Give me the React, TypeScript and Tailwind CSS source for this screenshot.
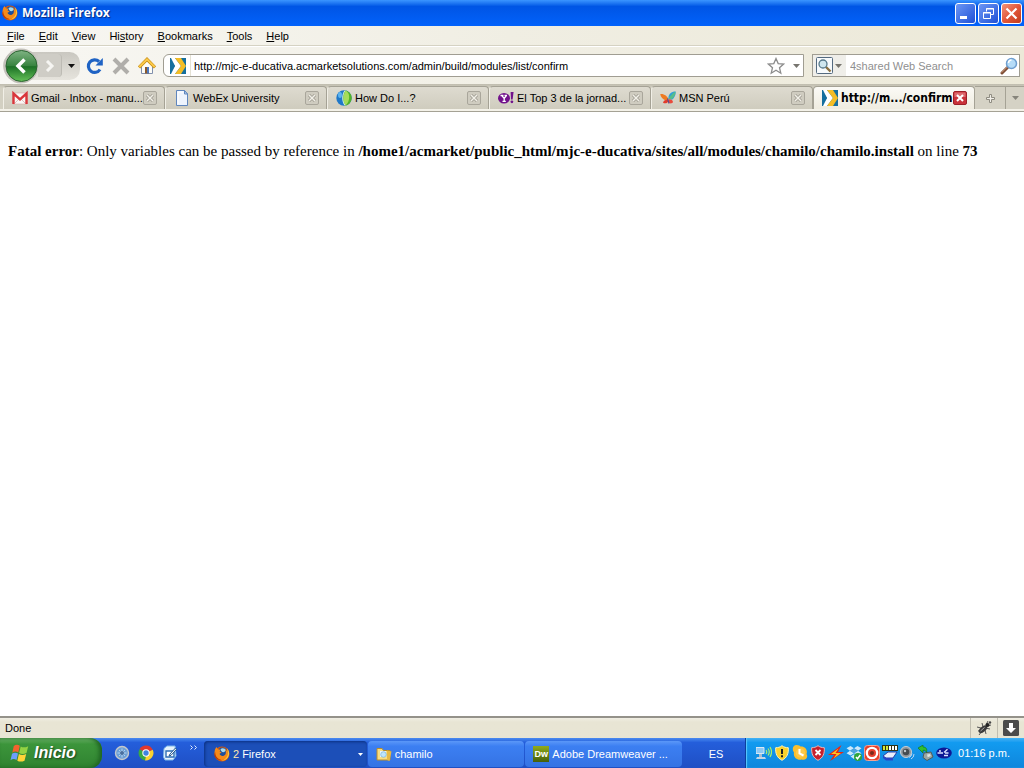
import type { ReactNode } from 'react';

const menus = [
  ['', 'F', 'ile'],
  ['', 'E', 'dit'],
  ['', 'V', 'iew'],
  ['Hi', 's', 'tory'],
  ['', 'B', 'ookmarks'],
  ['', 'T', 'ools'],
  ['', 'H', 'elp'],
];

function FirefoxIcon() {
  return (
    <svg viewBox="0 0 16 16" className="h-4 w-4 shrink-0" aria-hidden="true">
      <circle cx="8" cy="8" r="7.5" fill="#d9580a" />
      <circle cx="8.4" cy="6.6" r="5" fill="#1d4f9c" />
      <path d="M6.500 3c2-1.500 5-.5 5.500 1.500-1 .4-1.200 1.800-2.700 1.800S6.700 4.500 6.500 3z" fill="#a4dcf2" />
      <path d="M1 3.500L2.300 1l1.700 2.200 2.600.6-1 1.800 2 .7c-.6 1-1.700 1.100-2 1.500.4 1.700 2.300 2.700 4.200 1.900 1.600-.6 2.300-2 2-4.200l-.9-2.300 2.700 2.100c.8 3-.1 6-2.800 7.700-3 1.700-7 1-9-1.700C.3 8.800.3 5.900 1 3.500z" fill="#f58a1a" />
      <path d="M12.800 2.300c2.600 2.500 3.200 6.300 1 9.400-1.600 2.200-4.300 3.200-6.800 2.900 3.800-.6 6.800-3.600 6.800-7.300 0-2-.5-3.700-1-5z" fill="#fbc73a" />
      <path d="M1.300 6.300c-.3 3.800 2.400 7.300 6.200 7.500-2.600.6-5.800-.7-6.900-3.600-.4-1.400-.2-3 .7-3.900z" fill="#b33809" />
    </svg>
  );
}

function ChevronLogo() {
  return (
    <svg viewBox="0 0 16 16" className="h-4 w-4 shrink-0" aria-hidden="true">
      <path d="M0 0h16v16H0z" fill="#156f9e" />
      <path d="M1 0h4l6 8-6 8H1l4-8z" fill="#fff" />
      <path d="M1 2.500L5 8l-4 5.500z" fill="#156f9e" />
      <path d="M5 0h6l5 8-5 8H5l6-8z" fill="#f4bd25" />
    </svg>
  );
}

function GmailIcon() {
  return (
    <svg viewBox="0 0 16 16" className="h-4 w-4 shrink-0" aria-hidden="true">
      <path d="M1 3h14v11H1z" fill="#faf6f4" stroke="#d6a9a5" strokeWidth=".6" />
      <path d="M3 13l4-4M13 13L9 9" stroke="#d9c2be" />
      <path d="M1.500 14V3.500L8 9.300l6.500-5.800V14" fill="none" stroke="#d9363b" strokeWidth="2.400" />
    </svg>
  );
}

function PageIcon() {
  return (
    <svg viewBox="0 0 16 16" className="h-4 w-4 shrink-0" aria-hidden="true">
      <path d="M2.500.5h8l3 3.500v11.500h-11z" fill="#eef4fd" stroke="#5f86bd" />
      <path d="M10.500.5V4h3z" fill="#b8d0f0" stroke="#5f86bd" />
      <path d="M4 14V2h5" fill="none" stroke="#fff" />
    </svg>
  );
}

function GlobeIcon() {
  return (
    <svg viewBox="0 0 16 16" className="h-4 w-4 shrink-0" aria-hidden="true">
      <circle cx="8" cy="8" r="7.700" fill="#1f78c8" />
      <path d="M9 .4c4.300.5 6.700 4 6.700 7.600s-2.700 7-6.700 7.700C6 12 6 4 9 .4z" fill="#53b427" />
      <path d="M9.500.6C13 2.500 13.500 6 13 9s-2 5.500-4 6.500C7 11 7 5 9.500.6z" fill="#a6dc5c" />
      <path d="M9 .6C6 4 6 12 9 15.400" fill="none" stroke="#d4f0f0" />
      <ellipse cx="4" cy="5" rx="2" ry="3" fill="#5db4ee" />
    </svg>
  );
}

function YahooIcon() {
  return (
    <svg viewBox="0 0 16 16" className="h-4 w-4 shrink-0" aria-hidden="true">
      <ellipse cx="6" cy="8.300" rx="6" ry="5.300" fill="#72128c" />
      <path d="M2.500 5.500h3M6.500 5.500H9M4 5.800l2.200 2.700 2-2.700M6.200 8.500v2.700M4.500 11.300h3.300" fill="none" stroke="#fff" strokeWidth="1.300" />
      <path d="M12.600 2h3l-1 7.500H13z" fill="#72128c" />
      <circle cx="13.900" cy="11.800" r="1.400" fill="#72128c" />
    </svg>
  );
}

function MsnIcon() {
  return (
    <svg viewBox="0 0 16 16" className="h-4 w-4 shrink-0" aria-hidden="true">
      <path d="M8.500 9C8 4.500 11 1.500 15.500 1.500c.7 2.500-1 6.500-3.500 8.300z" fill="#2e9fdb" />
      <path d="M8.500 9c1.500-3 3.500-5.500 7-7.500 0 3-1.500 6-3.500 7.500z" fill="#58bd8a" />
      <path d="M8.500 9.500C7.500 6 4 3.500.3 4 .5 7 3 9.500 6 10.300z" fill="#ee7a22" />
      <path d="M8 9.700c-3-.2-4.500 1-5 3 2.500 1.300 4.500.3 5.500-1.500z" fill="#e33b2b" />
      <path d="M8.500 9.500c2.500-.5 4 .5 4.500 2.500-1.200 2.200-3.800 1.800-4.700-.5z" fill="#e94b3c" />
      <path d="M7.500 8.500l1.600 5" stroke="#5d4a8c" strokeWidth="1.200" />
    </svg>
  );
}

function CloseGlyph({ active }: { active?: boolean }) {
  return (
    <svg viewBox="0 0 14 14" className="h-3.5 w-3.5" aria-hidden="true">
      <rect x=".5" y=".5" width="13" height="13" rx="1.500" fill={active ? '#c9323a' : '#cfccc0'} stroke={active ? '#9d1f27' : '#a9a69b'} />
      {active && <path d="M1.500 1.500h11v4.500h-11z" fill="#dc6a6e" />}
      <path d="M4 4l6 6M10 4l-6 6" stroke={active ? '#fff' : '#9b988d'} strokeWidth={active ? 2 : 3} />
      {!active && <path d="M4 4l6 6M10 4l-6 6" stroke="#f2f0e8" strokeWidth="1.500" />}
    </svg>
  );
}

function Caret({ color }: { color: string }) {
  return (
    <svg viewBox="0 0 7 4" className="h-1 w-[7px] shrink-0" aria-hidden="true">
      <path d="M0 0h7L3.500 4z" fill={color} />
    </svg>
  );
}

const tabs: { icon: ReactNode; title: string }[] = [
  { icon: <GmailIcon />, title: 'Gmail - Inbox - manu...' },
  { icon: <PageIcon />, title: 'WebEx University' },
  { icon: <GlobeIcon />, title: 'How Do I...?' },
  { icon: <YahooIcon />, title: 'El Top 3 de la jornad...' },
  { icon: <MsnIcon />, title: 'MSN Perú' },
];

function TitleBar() {
  return (
    <header className="flex h-[26px] items-center bg-linear-to-b from-[#3b95ff] via-[#0055e5] via-25% to-[#0262fb] pr-0.5 pl-0.5">
      <FirefoxIcon />
      <h1 className="flex-1 pl-1 font-['Open_Sans',sans-serif] text-xs font-bold text-white [text-shadow:1px_1px_1px_#0a2a80]">Mozilla Firefox</h1>
      <div className="flex gap-0.5">
        <button aria-label="Minimize" className="h-[21px] w-[21px] rounded-[3px] border border-white bg-linear-to-br from-[#6d96f4] to-[#1f4fd6]">
          <svg viewBox="0 0 19 19" className="h-full w-full"><path d="M4 12h7v3H4z" fill="#fff" /></svg>
        </button>
        <button aria-label="Restore" className="h-[21px] w-[21px] rounded-[3px] border border-white bg-linear-to-br from-[#6d96f4] to-[#1f4fd6]">
          <svg viewBox="0 0 19 19" className="h-full w-full">
            <path d="M7.500 7.500v-3h7v6h-3M7 5h8M4.500 8.500h7v6h-7zM4 9h8" fill="none" stroke="#fff" />
          </svg>
        </button>
        <button aria-label="Close" className="h-[21px] w-[21px] rounded-[3px] border border-white bg-linear-to-br from-[#f0937a] via-[#e2573a] to-[#c23c1a]">
          <svg viewBox="0 0 19 19" className="h-full w-full"><path d="M4.500 4.500l10 10M14.500 4.500l-10 10" stroke="#fff" strokeWidth="2.200" /></svg>
        </button>
      </div>
    </header>
  );
}

function MenuBar() {
  return (
    <nav className="flex h-5 items-center gap-3.5 border-b border-[#d5d2c3] bg-linear-to-r from-[#f8f7f3] via-[#f0eee3] to-[#ece9d8] px-[7px]">
      {menus.map(([before, key, after]) => (
        <button key={before + key + after}>
          {before}<span className="underline underline-offset-1">{key}</span>{after}
        </button>
      ))}
    </nav>
  );
}

function NavBar() {
  return (
    <div className="flex h-[38px] items-center border-t border-white bg-linear-to-r from-[#f8f7f3] via-[#f1efe5] to-[#ece9d8] pr-1 pl-[3px]">
      {/* Keyhole: back, forward, history */}
      <div className="flex h-7 w-[77px] shrink-0 items-center rounded-l-2xl rounded-r-xl bg-linear-to-b from-[#c9c7c0] to-[#e6e4dd]">
        <button aria-label="Back" className="-ml-px h-9 w-9 shrink-0">
          <svg viewBox="0 0 36 36" className="h-9 w-9">
            <defs>
              <linearGradient id="back" x1="0" y1="0" x2="0" y2="1">
                <stop offset="0" stopColor="#7fb383" />
                <stop offset=".5" stopColor="#37833f" />
                <stop offset=".52" stopColor="#1c7026" />
                <stop offset="1" stopColor="#64c157" />
              </linearGradient>
            </defs>
            <circle cx="19" cy="18" r="17.500" fill="#c2c0b9" />
            <circle cx="19.500" cy="18" r="15.500" fill="url(#back)" stroke="#2c6632" />
            <path d="M22.500 11.500L16 18l6.500 6.500" fill="none" stroke="#fff" strokeWidth="3.500" />
          </svg>
        </button>
        <button aria-label="Forward" className="flex h-[23px] w-6 items-center justify-center rounded-r-sm border-r border-[#bdbbb4] bg-[#cfcdc6]">
          <svg viewBox="0 0 10 12" className="h-3 w-2.5"><path d="M2 1l5 5-5 5" fill="none" stroke="#f6f5f2" strokeWidth="3" /></svg>
        </button>
        <button aria-label="Recent pages" className="flex flex-1 items-center justify-center"><Caret color="#111" /></button>
      </div>
      <div className="flex shrink-0 items-center gap-2 pr-[7px] pl-1.5">
        <button aria-label="Reload">
          <svg viewBox="0 0 18 18" className="h-[18px] w-[18px]">
            <path d="M14 12.500A6.300 6.300 0 1 1 13 4.500" fill="none" stroke="#1f63c4" strokeWidth="3.200" />
            <path d="M16.800 1v7.500H9.500z" fill="#1f63c4" />
          </svg>
        </button>
        <button aria-label="Stop">
          <svg viewBox="0 0 18 18" className="h-[18px] w-[18px]"><path d="M2 2l14 14M16 2L2 16" stroke="#b0aeaa" strokeWidth="4" /></svg>
        </button>
        <button aria-label="Home">
          <svg viewBox="0 0 18 18" className="h-[18px] w-[18px]">
            <path d="M3.500 9v7.500h11V9L9 4z" fill="#fdfcf6" stroke="#8190ad" />
            <path d="M7 10h4v6.500H7z" fill="#8a5a2c" />
            <path d="M9 10h2v6.500H9z" fill="#4c78c0" />
            <path d="M1 10.500L9 2.300l8 8.200" fill="none" stroke="#c78d12" strokeWidth="3.200" />
            <path d="M1.300 10L9 2.300 16.700 10" fill="none" stroke="#fbc94a" strokeWidth="1.800" />
          </svg>
        </button>
      </div>
      <form className="flex h-[23px] flex-1 items-center rounded-l-md border border-[#a09d92] bg-white pr-0.5">
        <span className="mr-[3px] flex h-full items-center border-r border-[#e4e1d4] pr-1 pl-1.5"><ChevronLogo /></span>
        <input
          aria-label="Location"
          type="text"
          defaultValue="http://mjc-e-ducativa.acmarketsolutions.com/admin/build/modules/list/confirm"
          className="h-full min-w-0 flex-1 text-black outline-none"
        />
        <button type="button" aria-label="Bookmark this page">
          <svg viewBox="0 0 18 18" className="h-[18px] w-[18px]">
            <path d="M9 1.500l2.200 5.100 5.400.5-4.100 3.600 1.300 5.500L9 13.300l-4.800 2.900 1.300-5.500L1.400 7.100l5.400-.5z" fill="#fff" stroke="#8c8c8c" strokeWidth="1.300" />
          </svg>
        </button>
        <button type="button" aria-label="Show history" className="pr-px pl-2"><Caret color="#77756f" /></button>
      </form>
      <form className="ml-2 flex h-[23px] w-52 shrink-0 items-center border border-[#a09d92] bg-white">
        <button type="button" aria-label="Search engine" className="flex h-full items-center gap-0.5 bg-[#efeee9] pr-1 pl-[3px]">
          <svg viewBox="0 0 17 17" className="h-[17px] w-[17px]">
            <rect x=".5" y=".5" width="16" height="16" rx="1" fill="#f7fafc" stroke="#546a80" />
            <path d="M9.500 9.500l5 5" stroke="#8b7040" strokeWidth="2.400" />
            <circle cx="7" cy="7" r="4" fill="#cfe6ee" stroke="#56788a" strokeWidth="1.300" />
          </svg>
          <Caret color="#77756f" />
        </button>
        <input aria-label="Search" type="text" placeholder="4shared Web Search" className="h-full min-w-0 flex-1 pl-1 outline-none placeholder:text-[#8f8f8f]" />
        <button type="button" aria-label="Go" className="pr-px">
          <svg viewBox="0 0 18 18" className="h-[18px] w-[18px]">
            <path d="M2 16l5.500-5.500" stroke="#7c4b33" strokeWidth="3" strokeLinecap="round" />
            <path d="M2 15.300l5-5" stroke="#cf9a7b" strokeLinecap="round" />
            <circle cx="11.500" cy="6.500" r="5" fill="#b5dcf8" stroke="#6f9fd0" strokeWidth="1.500" />
            <path d="M8.500 6a3 3 0 0 1 3-3" fill="none" stroke="#fff" strokeWidth="1.500" />
          </svg>
        </button>
      </form>
    </div>
  );
}

function TabBar() {
  return (
    <div className="bg-linear-to-b from-[#bfbcae] to-[#d3d0c2] to-15% pt-0.5">
      <div className="flex h-[23px] pl-[3px]">
        {tabs.map((tab) => (
          <div key={tab.title} className="flex min-w-0 flex-1 items-center rounded-t-sm border border-b-0 border-[#a5a295] border-l-[#f1efe6] bg-linear-to-b from-[#dedbd0] to-[#cfccbe] pr-[7px] pl-2">
            <button className="flex min-w-0 flex-1 items-center gap-[3px] whitespace-nowrap">{tab.icon}{tab.title}</button>
            <button aria-label={'Close ' + tab.title}><CloseGlyph /></button>
          </div>
        ))}
        <div className="flex min-w-0 flex-1 items-center rounded-t-sm border border-b-0 border-[#a5a295] bg-linear-to-b from-[#fbfaf6] to-[#efece0] pr-[7px] pl-2">
          <button className="flex min-w-0 flex-1 items-center gap-[3px] font-['DejaVu_Sans_Condensed',sans-serif] text-xs font-bold whitespace-nowrap"><ChevronLogo />http://m.../confirm</button>
          <button aria-label="Close http://m.../confirm"><CloseGlyph active /></button>
        </div>
        <button aria-label="Open a new tab" className="flex w-[31px] items-center justify-center border-t border-r border-[#a5a295] bg-[#d5d2c5]">
          <svg viewBox="0 0 9 9" className="h-[9px] w-[9px]">
            <path d="M3.500.5h2v3h3v2h-3v3h-2v-3h-3v-2h3z" fill="#f1efe8" stroke="#8f8c82" />
          </svg>
        </button>
        <button aria-label="List all tabs" className="flex w-[18px] items-center justify-center border-t border-[#a5a295] bg-[#d5d2c5]"><Caret color="#86847b" /></button>
      </div>
      <div className="h-[3px] border-b border-[#a5a295] bg-[#f4f2e9]" />
    </div>
  );
}

function StatusBar() {
  return (
    <div className="flex h-[22px] items-center border-t-2 border-[#94928a] bg-linear-to-b from-[#f0eee3] to-[#e8e5d4] to-20% pl-[5px]">
      <p className="flex-1">Done</p>
      <button aria-label="Firebug" className="flex h-full w-[27px] items-center justify-center border-l border-[#c1beb0]">
        <svg viewBox="0 0 16 16" className="h-4 w-4">
          <path d="M1 7l4 1M2 11l4-1M3 15l3-4M6 3l1 4M10 14l-1-4M14 9l-5-1M12 1l-2 4M15 5l-4 1" fill="none" stroke="#555" />
          <ellipse cx="7" cy="9.300" rx="5" ry="2.700" transform="rotate(-40 7 9.300)" fill="#3b3b3b" />
          <path d="M4.500 11l4-3.500" stroke="#a9a9a9" />
          <circle cx="11.500" cy="5" r="2" fill="#222" />
          <circle cx="14" cy="2.500" r="1.200" fill="#444" />
        </svg>
      </button>
      <button aria-label="Downloads" className="flex h-full w-[27px] items-center justify-center border-l border-[#c1beb0]">
        <svg viewBox="0 0 16 16" className="h-4 w-4">
          <rect width="16" height="16" rx="1.500" fill="#4b4b4b" />
          <path d="M6 3h4v5h3l-5 5-5-5h3z" fill="#fff" />
        </svg>
      </button>
    </div>
  );
}

function WindowsFlag() {
  return (
    <svg viewBox="0 0 20 18" className="h-[18px] w-5" aria-hidden="true">
      <path d="M3.800 2c2-1.500 4-1.500 6-.2L8.300 8.500c-2-1.200-4-1.200-6 .2z" fill="#f4622e" />
      <path d="M10.700 2.500c2 1.200 4.500 1.200 7.500-.3L16.500 9c-2.600 1.300-5.200 1.300-7.400 0z" fill="#93d243" />
      <path d="M2 9.800c2-1.500 4-1.500 6-.2l-1.500 6.400c-2-1.200-4-1.200-6 .2z" fill="#6c9efb" />
      <path d="M8.900 10c2.100 1.300 4.700 1.300 7.300 0l-1.700 6.700c-2.500 1.200-5 1.200-7.200 0z" fill="#ffd338" />
    </svg>
  );
}

// Notification area icons, left to right
const trayIcons: { name: string; art: ReactNode }[] = [
  {
    name: 'Wireless network',
    art: (
      <>
        <path d="M0 2.500h8v6H0z" fill="#8ec9f5" stroke="#d8e8f5" />
        <path d="M1 12h8l1 2H0z" fill="#c5d5e4" />
        <path d="M3 9h3v3H3z" fill="#a7bdd0" />
        <path d="M10 5q1.500 2 0 4M12 3.500q2.500 3.500 0 7M14 2q3 5 0 10" fill="none" stroke="#a9f06b" strokeWidth="1.200" />
      </>
    ),
  },
  {
    name: 'Security alert',
    art: (
      <>
        <path d="M8 .7c2 1.500 4 2 6.300 2 .4 6-1.300 10-6.300 12.600C3 12.700 1.300 8.700 1.700 2.700 4 2.700 6 2.200 8 .7z" fill="#fbd22c" stroke="#fff3b8" />
        <path d="M7 4h2v5H7zM7 10.300h2v2H7z" fill="#222" />
      </>
    ),
  },
  {
    name: 'Messenger',
    art: (
      <>
        <path d="M4.500 0C7 0 8 1 8.500 1.500 13 1 16 5 14.500 9c2 3-.5 7-5 5.500C5 15.500 1 12 2 7.500-.5 4 1 0 4.500 0z" fill="#fcbf2e" />
        <circle cx="8.500" cy="8" r="4.700" fill="#fdc94a" />
        <path d="M7.500 4v4.500l4 2" fill="none" stroke="#fff" strokeWidth="2" />
      </>
    ),
  },
  {
    name: 'Antivirus',
    art: (
      <>
        <path d="M8 .7c2 1.500 4 2 6.300 2 .4 6-1.300 10-6.300 12.600C3 12.700 1.300 8.700 1.700 2.700 4 2.700 6 2.200 8 .7z" fill="#c7202d" stroke="#efb6b2" />
        <path d="M5.500 5l5 5M10.500 5l-5 5" stroke="#fff" strokeWidth="1.800" />
      </>
    ),
  },
  {
    name: 'Download manager',
    art: (
      <>
        <path d="M13.500 0L0 10h6l-4 6L16 7h-6z" fill="#e42718" />
        <path d="M10.500 3.500L3 9h5.500l-3 4.500L13 8H7.500z" fill="#fdc422" />
      </>
    ),
  },
  {
    name: 'Dropbox',
    art: (
      <>
        <path d="M4.500 1L8 3.300 4 5.700.5 3.300zM11.500 1L15.500 3.300 12 5.700 8 3.300zM.5 8.300L4 5.700 8 8.300 4.500 10.500zM12 5.700l3.500 2.600-4 2.200L8 8.300zM4.500 11.500L8 9.300l3.500 2.200L8 14z" fill="#cbe8fb" />
        <path d="M4 5.700l4-2.400 4 2.400-4 2.600z" fill="#4da3df" />
        <circle cx="12" cy="12" r="4" fill="#2fa53b" />
        <path d="M10 12l1.500 1.700L14.300 10" fill="none" stroke="#fff" strokeWidth="1.500" />
      </>
    ),
  },
  {
    name: 'Recorder',
    art: (
      <>
        <rect x=".5" y=".5" width="15" height="15" rx="3" fill="#e8402c" stroke="#f6a190" />
        <circle cx="8" cy="8" r="6.300" fill="#fff" />
        <circle cx="8" cy="8" r="4" fill="#e8402c" />
        <circle cx="8" cy="8" r="2" fill="#7a2a1c" />
      </>
    ),
  },
  {
    name: 'Battery',
    art: (
      <>
        <path d="M0 0h16v6H0z" fill="#2c3316" />
        <path d="M1 1h2v4H1zM4 1h2v4H4z" fill="#d3e83a" />
        <path d="M7 1h2v4H7zM10 1h2v4h-2zM13 1h2v4h-2z" fill="#fff" />
        <path d="M1 11l5-4h9l-4 6H4z" fill="#e7eefc" stroke="#243da8" />
        <path d="M1 11l3 2h7v2.500H4L1 13z" fill="#2946c8" />
      </>
    ),
  },
  {
    name: 'Volume',
    art: (
      <>
        <circle cx="6" cy="7" r="5.500" fill="#8f969c" stroke="#c9d0d5" />
        <circle cx="6" cy="7" r="3.300" fill="#454b50" />
        <circle cx="5" cy="6" r="1.200" fill="#c2c8cd" />
        <path d="M11 14q3-1.500 3-5M9 12.500q2.500-1 3-4" fill="none" stroke="#b5d6f5" />
      </>
    ),
  },
  {
    name: 'Safely remove hardware',
    art: (
      <>
        <path d="M6 8l7-1 2 5-6 3.500-4-3z" fill="#9aa5a2" stroke="#4e5b5a" />
        <path d="M9 9.500l3-.5.7 2-3 1.200z" fill="#dfe5e2" />
        <path d="M0 3l5-3v2c3 0 4.500 2 3.500 5.500C8 6 7 5 5 5.300V8z" fill="#2fbf2f" stroke="#106b16" strokeWidth=".6" />
      </>
    ),
  },
  {
    name: 'Display',
    art: (
      <>
        <ellipse cx="8" cy="8" rx="7.800" ry="5.500" fill="#0d1896" />
        <path d="M1.500 8H7M8 7.500l3.500-3.300M9 8h3.500M8 10.500h4M3 6h2" fill="none" stroke="#dbe4ff" strokeWidth="1.300" />
      </>
    ),
  },
];

function Taskbar() {
  return (
    <footer className="flex h-[30px] bg-linear-to-b from-[#4a8af0] via-[#245edb] via-15% to-[#1f4fc4] text-white">
      <button className="flex w-[102px] shrink-0 items-center gap-1 rounded-r-xl bg-linear-to-b from-[#6cb46a] via-[#3c953b] via-20% to-[#2f8330] pl-2.5 shadow-[inset_-3px_0_4px_#1f6422]">
        <WindowsFlag />
        <span className="font-['Liberation_Sans',sans-serif] text-base font-bold italic [text-shadow:1px_1px_2px_#1b3f1c]">Inicio</span>
      </button>
      <div className="flex w-[102px] shrink-0 items-center gap-2 pl-3">
        <button aria-label="Media player">
          <svg viewBox="0 0 16 16" className="h-4 w-4">
            <circle cx="8" cy="8" r="6.500" fill="#6da0d6" stroke="#c4c8cc" strokeWidth="1.400" />
            <path d="M3.500 8h9M8 3.500v9M5 5l6 6M11 5l-6 6" stroke="#c7dff5" strokeWidth=".8" />
            <circle cx="8" cy="8" r="2" fill="#4a6f9e" />
          </svg>
        </button>
        <button aria-label="Chrome">
          <svg viewBox="0 0 16 16" className="h-4 w-4">
            <path d="M8 8L1.500 4.300A7.500 7.500 0 0 1 14.700 4.700z" fill="#e2382d" />
            <path d="M8 8L14.700 4.700A7.500 7.500 0 0 1 7 15.400z" fill="#fbd230" />
            <path d="M8 8L7 15.400A7.500 7.500 0 0 1 1.500 4.300z" fill="#39a845" />
            <circle cx="8" cy="8" r="3.700" fill="#fff" />
            <circle cx="8" cy="8" r="2.700" fill="#3f83e0" />
          </svg>
        </button>
        <button aria-label="Show desktop">
          <svg viewBox="0 0 16 16" className="h-4 w-4">
            <path d="M2 3.500L5 1h8l1 10-3 4H3L1.500 12z" fill="#e6f3fc" stroke="#7fb8e8" />
            <path d="M4 6h8v6H4z" fill="#fff" stroke="#2d6fb5" strokeWidth="1.400" />
            <path d="M13.500 3L8 9l-1 2 2-.7 5.500-6z" fill="#fff" stroke="#23588f" />
          </svg>
        </button>
        <button aria-label="More shortcuts" className="self-start pt-[7px] pl-1">
          <svg viewBox="0 0 8 5" className="h-[5px] w-2"><path d="M.5.500l2 2-2 2M4.500.500l2 2-2 2" fill="none" stroke="#e4eeff" /></svg>
        </button>
      </div>
      <div className="flex min-w-0 flex-1 items-center gap-px pt-0.5">
        <button className="flex h-[26px] min-w-0 flex-1 items-center gap-[3px] rounded-sm bg-[#1c4fb8] pr-1 pl-2.5 shadow-[inset_1px_1px_3px_#0b2f80]">
          <FirefoxIcon />
          <span className="text-[#ffe9b0]">2</span>
          <span className="flex-1 text-left">Firefox</span>
          <svg viewBox="0 0 5 3" className="h-[3px] w-[5px]"><path d="M0 0h5L2.500 3z" fill="#fff" /></svg>
        </button>
        <button className="flex h-[26px] min-w-0 flex-1 items-center gap-[3px] rounded-sm bg-linear-to-b from-[#5b97f8] via-[#3c7ff2] via-20% to-[#3573e4] pl-2">
          <svg viewBox="0 0 16 16" className="h-4 w-4">
            <path d="M1 2.500h5l1.500 2H14V14H1z" fill="#f8dd83" stroke="#b98c2a" />
            <path d="M11 4.500l4.500 1L13.500 15l-2.500-1z" fill="#e7b945" />
            <path d="M4 5h6v6H4z" fill="#eaf6ff" />
            <circle cx="7.500" cy="8.500" r="2.800" fill="#bfe5fb" stroke="#7ab0d8" strokeWidth=".7" />
          </svg>
          chamilo
        </button>
        <button className="flex h-[26px] min-w-0 flex-1 items-center gap-[3px] rounded-sm bg-linear-to-b from-[#5b97f8] via-[#3c7ff2] via-20% to-[#3573e4] pl-2 whitespace-nowrap">
          <span className="flex h-4 w-4 shrink-0 items-center justify-center bg-linear-to-b from-[#92ab1c] to-[#46600b] text-[9px] leading-none font-bold">Dw</span>
          Adobe Dreamweaver ...
        </button>
        <button className="w-[62px] shrink-0 pl-1 text-center">ES</button>
      </div>
      <div className="flex shrink-0 items-center border-l border-[#0c3f9c] bg-linear-to-b from-[#3fb0f4] via-[#129bf0] via-15% to-[#0f86dc] pr-3.5 pl-2.5 shadow-[inset_1px_0_1px_#5ccaff]">
        <div className="flex gap-0.5">
          {trayIcons.map((icon) => (
            <svg key={icon.name} viewBox="0 0 16 16" role="img" aria-label={icon.name} className="h-4 w-4">{icon.art}</svg>
          ))}
        </div>
        <time className="pl-1.5">01:16 p.m.</time>
      </div>
    </footer>
  );
}

export default function App() {
  return (
    <div className="flex min-h-screen flex-col bg-white font-['Liberation_Sans',Arial,sans-serif] text-[11px] leading-4 text-black">
      <TitleBar />
      <MenuBar />
      <NavBar />
      <TabBar />
      <main className="flex-1 px-2 pt-[29px] font-['Liberation_Serif','Times_New_Roman',serif] text-[15px] leading-5">
        <p>
          <b>Fatal error</b>: Only variables can be passed by reference in <b>/home1/acmarket/public_html/mjc-e-ducativa/sites/all/modules/chamilo/chamilo.install</b> on line <b>73</b>
        </p>
      </main>
      <StatusBar />
      <Taskbar />
    </div>
  );
}
